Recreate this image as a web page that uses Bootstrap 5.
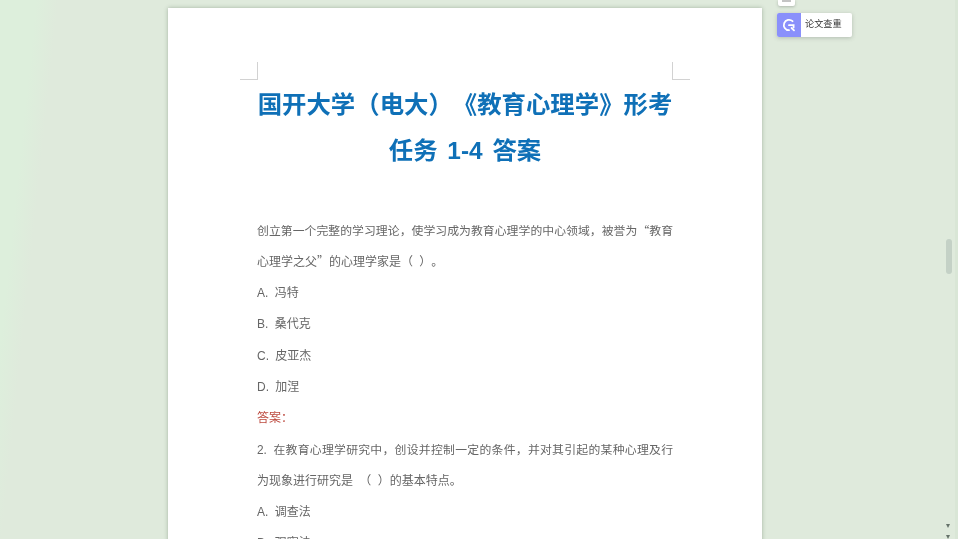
<!DOCTYPE html>
<html lang="zh-CN">
<head>
<meta charset="utf-8">
<title>国开大学（电大）《教育心理学》形考任务 1-4 答案</title>
<link href="https://cdn.jsdelivr.net/npm/bootstrap@5.3.0/dist/css/bootstrap.min.css" rel="stylesheet">
<style>
html,body{height:100%;}
body{overflow:hidden;background:#dfeadc linear-gradient(96deg,#ddefdc 0,#ddefdc 36px,#dfeadc 58px);font-family:"Liberation Sans","Noto Sans CJK SC",sans-serif;text-spacing-trim:space-all;}
.doc-stage{height:539px;padding-left:168px;padding-top:8px;overflow:hidden;position:relative;}
.doc-sheet{width:594px;height:640px;flex:none;background:#fff;box-shadow:0 0 4px rgba(90,110,90,.45);padding:74px 89px 0;position:relative;}
.crop-mark{position:absolute;top:54px;width:18px;height:18px;border-bottom:1px solid #d2d2d2;}
.crop-left{left:72px;border-right:1px solid #d2d2d2;}
.crop-right{right:72px;border-left:1px solid #d2d2d2;}
.doc-title{font-size:24.4px;line-height:46px;font-weight:700;color:#0f70b7;text-align:center;word-spacing:3px;margin:0 -3px 41.5px;filter:blur(.35px);}
.doc-line{font-size:12px;line-height:31.3px;height:31.3px;margin:0;color:#666;white-space:nowrap;word-spacing:3px;filter:blur(.4px);}
.doc-fit{font-size:11.85px;white-space:normal;text-align:justify;text-align-last:justify;}
.cjk-mark{font-family:"Noto Sans CJK SC",sans-serif;line-height:0;}
.doc-answer{color:#bd4a3f;}
.side-tools{width:75px;margin-left:15px;margin-top:-8px;flex:none;}
.side-mini{width:17px;height:6px;margin-left:1px;margin-bottom:7px;background:#fff;border-radius:0 0 2px 2px;box-shadow:0 1px 3px rgba(80,90,80,.35);display:flex;justify-content:center;}
.side-mini i{display:block;width:9px;height:2px;background:#c4c4c4;}
.check-card{height:24px;background:#fff;border-radius:2px;box-shadow:0 1px 4px rgba(80,90,80,.3);overflow:hidden;}
.check-icon{width:24px;height:24px;background:#8a90fb;flex:none;}
.check-label{font-size:9.2px;color:#333;padding-left:4px;white-space:nowrap;filter:blur(.3px);}
.scroll-thumb{position:absolute;left:946px;top:239px;width:6px;height:35px;border-radius:3px;background:#c4d1c6;}
.scroll-edge{position:absolute;left:955px;top:0;width:3px;height:539px;background:#d9e6d6;}
.scroll-arrow{position:absolute;left:946px;width:0;height:0;border-left:2.5px solid transparent;border-right:2.5px solid transparent;border-top:4px solid #66736a;}
.arrow-a{top:524px}.arrow-b{top:535px}
</style>
</head>
<body>
<main class="doc-stage d-flex align-items-start">
  <article class="doc-sheet">
    <span class="crop-mark crop-left"></span>
    <span class="crop-mark crop-right"></span>
    <h1 class="doc-title">国开大学（电大）《教育心理学》形考<br>任务 1-4 答案</h1>
    <p class="doc-line doc-fit">创立第一个完整的学习理论，使学习成为教育心理学的中心领域，被誉为<span class="cjk-mark">“</span>教育</p>
    <p class="doc-line">心理学之父<span class="cjk-mark">”</span>的心理学家是（ ）。</p>
    <p class="doc-line">A. 冯特</p>
    <p class="doc-line">B. 桑代克</p>
    <p class="doc-line">C. 皮亚杰</p>
    <p class="doc-line">D. 加涅</p>
    <p class="doc-line doc-answer">答案：</p>
    <p class="doc-line doc-fit">2. 在教育心理学研究中，创设并控制一定的条件，并对其引起的某种心理及行</p>
    <p class="doc-line">为现象进行研究是 （ ）的基本特点。</p>
    <p class="doc-line">A. 调查法</p>
    <p class="doc-line">B. 观察法</p>
  </article>
  <aside class="side-tools">
    <div class="side-mini"><i></i></div>
    <div class="check-card d-flex align-items-center">
      <div class="check-icon d-flex align-items-center justify-content-center">
        <svg width="16" height="16" viewBox="0 0 16 16" fill="none" stroke="#fff" stroke-width="1.8" stroke-linecap="round">
          <path d="M11.6 4.2A5.2 5.2 0 1 0 8 13.2"/>
          <path d="M8 8.2h4.6v2.2"/>
          <path d="M10.6 11l2.4 2.4"/>
        </svg>
      </div>
      <span class="check-label">论文查重</span>
    </div>
  </aside>
  <div class="scroll-edge"></div>
  <div class="scroll-thumb"></div>
  <div class="scroll-arrow arrow-a"></div>
  <div class="scroll-arrow arrow-b"></div>
</main>
<script src="https://cdn.jsdelivr.net/npm/bootstrap@5.3.0/dist/js/bootstrap.bundle.min.js"></script>
</body>
</html>
